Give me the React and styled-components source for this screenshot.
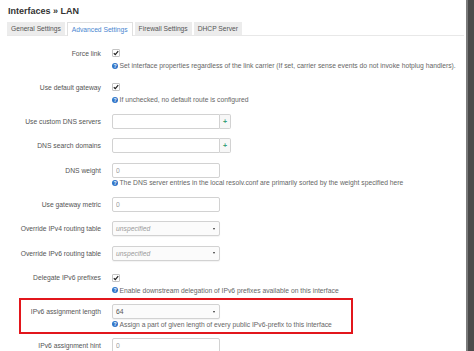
import React from "react"
import styled, { createGlobalStyle, css } from "styled-components"

const GlobalStyle = createGlobalStyle`
  html, body {
    margin: 0;
    padding: 0;
    background: #fff;
  }
  body {
    font-family: "Liberation Sans", Arial, sans-serif;
  }
`

const rows = [
  {
    label: "Force link",
    kind: "check",
    help: "Set interface properties regardless of the link carrier (If set, carrier sense events do not invoke hotplug handlers).",
  },
  {
    label: "Use default gateway",
    kind: "check",
    help: "If unchecked, no default route is configured",
  },
  { label: "Use custom DNS servers", kind: "add" },
  { label: "DNS search domains", kind: "add" },
  {
    label: "DNS weight",
    kind: "text",
    placeholder: "0",
    help: "The DNS server entries in the local resolv.conf are primarily sorted by the weight specified here",
  },
  { label: "Use gateway metric", kind: "text", placeholder: "0" },
  { label: "Override IPv4 routing table", kind: "select", value: "unspecified", muted: true },
  { label: "Override IPv6 routing table", kind: "select", value: "unspecified", muted: true },
  {
    label: "Delegate IPv6 prefixes",
    kind: "check",
    help: "Enable downstream delegation of IPv6 prefixes available on this interface",
  },
  {
    label: "IPv6 assignment length",
    kind: "select",
    value: "64",
    highlight: true,
    help: "Assign a part of given length of every public IPv6-prefix to this interface",
  },
  { label: "IPv6 assignment hint", kind: "text", placeholder: "0" },
]

const tabs = ["General Settings", "Advanced Settings", "Firewall Settings", "DHCP Server"]

const Check = () => (
  <CheckBox>
    <svg width="6" height="6" viewBox="0 0 6 6">
      <path d="M0.8 3.2 L2.3 4.6 L5.2 1.2" fill="none" stroke="#222" strokeWidth="1.2" />
    </svg>
  </CheckBox>
)

const Control = ({ row }) => {
  if (row.kind === "check") return <Check />
  if (row.kind === "add")
    return (
      <Group>
        <TextInput readOnly $grouped />
        <AddButton>+</AddButton>
      </Group>
    )
  if (row.kind === "select")
    return (
      <Select>
        <SelectValue $muted={row.muted}>{row.value}</SelectValue>
        <Caret />
      </Select>
    )
  return <TextInput readOnly placeholder={row.placeholder} />
}

const App = () => {
  return (
    <>
      <GlobalStyle />
      <Screen>
        <Main>
          <Title>Interfaces » LAN</Title>
          <Tabs>
            {tabs.map((t) => (
              <Tab key={t} $active={t === "Advanced Settings"}>
                {t}
              </Tab>
            ))}
          </Tabs>
          <Form>
            {rows.map((row) => (
              <Row key={row.label} $highlight={row.highlight}>
                <Label>{row.label}</Label>
                <Field>
                  <ControlLine>
                    <Control row={row} />
                  </ControlLine>
                  {row.help && (
                    <Help>
                      <HelpIcon>?</HelpIcon>
                      {row.help}
                    </Help>
                  )}
                </Field>
              </Row>
            ))}
          </Form>
        </Main>
        <Strip />
      </Screen>
    </>
  )
}
export default App

const Screen = styled.div`
  display: flex;
  width: 474px;
  height: 351px;
  overflow: hidden;
`

const Main = styled.main`
  flex: 1;
  min-width: 0;
  padding: 5px 2px 0 7px;
`

const Strip = styled.div`
  width: 6px;
  background: #4b4b4b;
  border-left: 2px solid #7b7b7b;
`

const Title = styled.h2`
  margin: 0 0 5px 1px;
  font-size: 9px;
  line-height: 12px;
  font-weight: bold;
  color: #333;
`

const Tabs = styled.ul`
  display: flex;
  gap: 2px;
  list-style: none;
  margin: 0;
  padding: 0;
  height: 13px;
  border-bottom: 1px solid #e8e8e8;
`

const Tab = styled.li`
  box-sizing: border-box;
  height: 13px;
  padding: 0 4px;
  display: flex;
  align-items: center;
  font-size: 6.7px;
  color: #555;
  background: #ececec;
  white-space: nowrap;
  ${(p) =>
    p.$active &&
    css`
      height: 14px;
      background: #fff;
      color: #4a86cf;
      border: 1px solid #e0e0e0;
      border-bottom: none;
    `}
`

const Form = styled.div`
  display: flex;
  flex-direction: column;
  padding-top: 9px;
`

const Row = styled.div`
  position: relative;
  display: grid;
  grid-template-columns: 94px 1fr;
  column-gap: 11px;
  margin-bottom: 8.5px;
  ${(p) =>
    p.$highlight &&
    css`
      &::after {
        content: "";
        position: absolute;
        left: 12px;
        top: -6px;
        width: 334px;
        height: 36px;
        box-sizing: border-box;
        border: 2px solid #e2161c;
        pointer-events: none;
      }
    `}
`

const Label = styled.div`
  height: 16px;
  display: flex;
  align-items: center;
  justify-content: flex-end;
  font-size: 6.75px;
  color: #555;
  white-space: nowrap;
`

const Field = styled.div`
  display: flex;
  flex-direction: column;
  min-width: 0;
`

const ControlLine = styled.div`
  height: 16px;
  display: flex;
  align-items: center;
`

const CheckBox = styled.span`
  box-sizing: border-box;
  width: 8px;
  height: 8px;
  border: 1px solid #c4c4c4;
  border-radius: 1px;
  display: flex;
  align-items: center;
  justify-content: center;
  background: #fff;
`

const Group = styled.div`
  display: flex;
`

const TextInput = styled.input`
  box-sizing: border-box;
  width: 108px;
  height: 15px;
  margin: 0;
  padding: 0 3px;
  border: 1px solid #d2d2d2;
  border-radius: ${(p) => (p.$grouped ? "2px 0 0 2px" : "2px")};
  font-family: inherit;
  font-size: 6.75px;
  color: #555;
  background: #fff;
  outline: none;
  &::placeholder {
    color: #9a9a9a;
  }
`

const AddButton = styled.span`
  box-sizing: border-box;
  width: 11px;
  height: 15px;
  display: flex;
  align-items: center;
  justify-content: center;
  border: 1px solid #d2d2d2;
  border-left: none;
  border-radius: 0 2px 2px 0;
  background: #f7f7f7;
  color: #3aa07a;
  font-size: 7px;
  font-weight: bold;
`

const Select = styled.div`
  box-sizing: border-box;
  width: 108px;
  height: 15px;
  padding: 0 4px 0 3px;
  display: flex;
  align-items: center;
  justify-content: space-between;
  border: 1px solid #d2d2d2;
  border-radius: 2px;
  background: #fbfbfb;
  box-shadow: 0 1px 1px rgba(0, 0, 0, 0.05);
`

const SelectValue = styled.span`
  font-size: 6.75px;
  color: ${(p) => (p.$muted ? "#9a9a9a" : "#555")};
  font-style: ${(p) => (p.$muted ? "italic" : "normal")};
`

const Caret = styled.span`
  width: 0;
  height: 0;
  border-left: 1.5px solid transparent;
  border-right: 1.5px solid transparent;
  border-top: 2px solid #333;
`

const Help = styled.div`
  display: flex;
  align-items: center;
  gap: 1.5px;
  height: 9.5px;
  font-size: 6.75px;
  color: #666;
  white-space: nowrap;
`

const HelpIcon = styled.span`
  width: 6px;
  height: 6px;
  border-radius: 50%;
  background: #2f74c8;
  color: #fff;
  font-size: 5px;
  font-weight: bold;
  line-height: 6px;
  text-align: center;
  flex-shrink: 0;
`
